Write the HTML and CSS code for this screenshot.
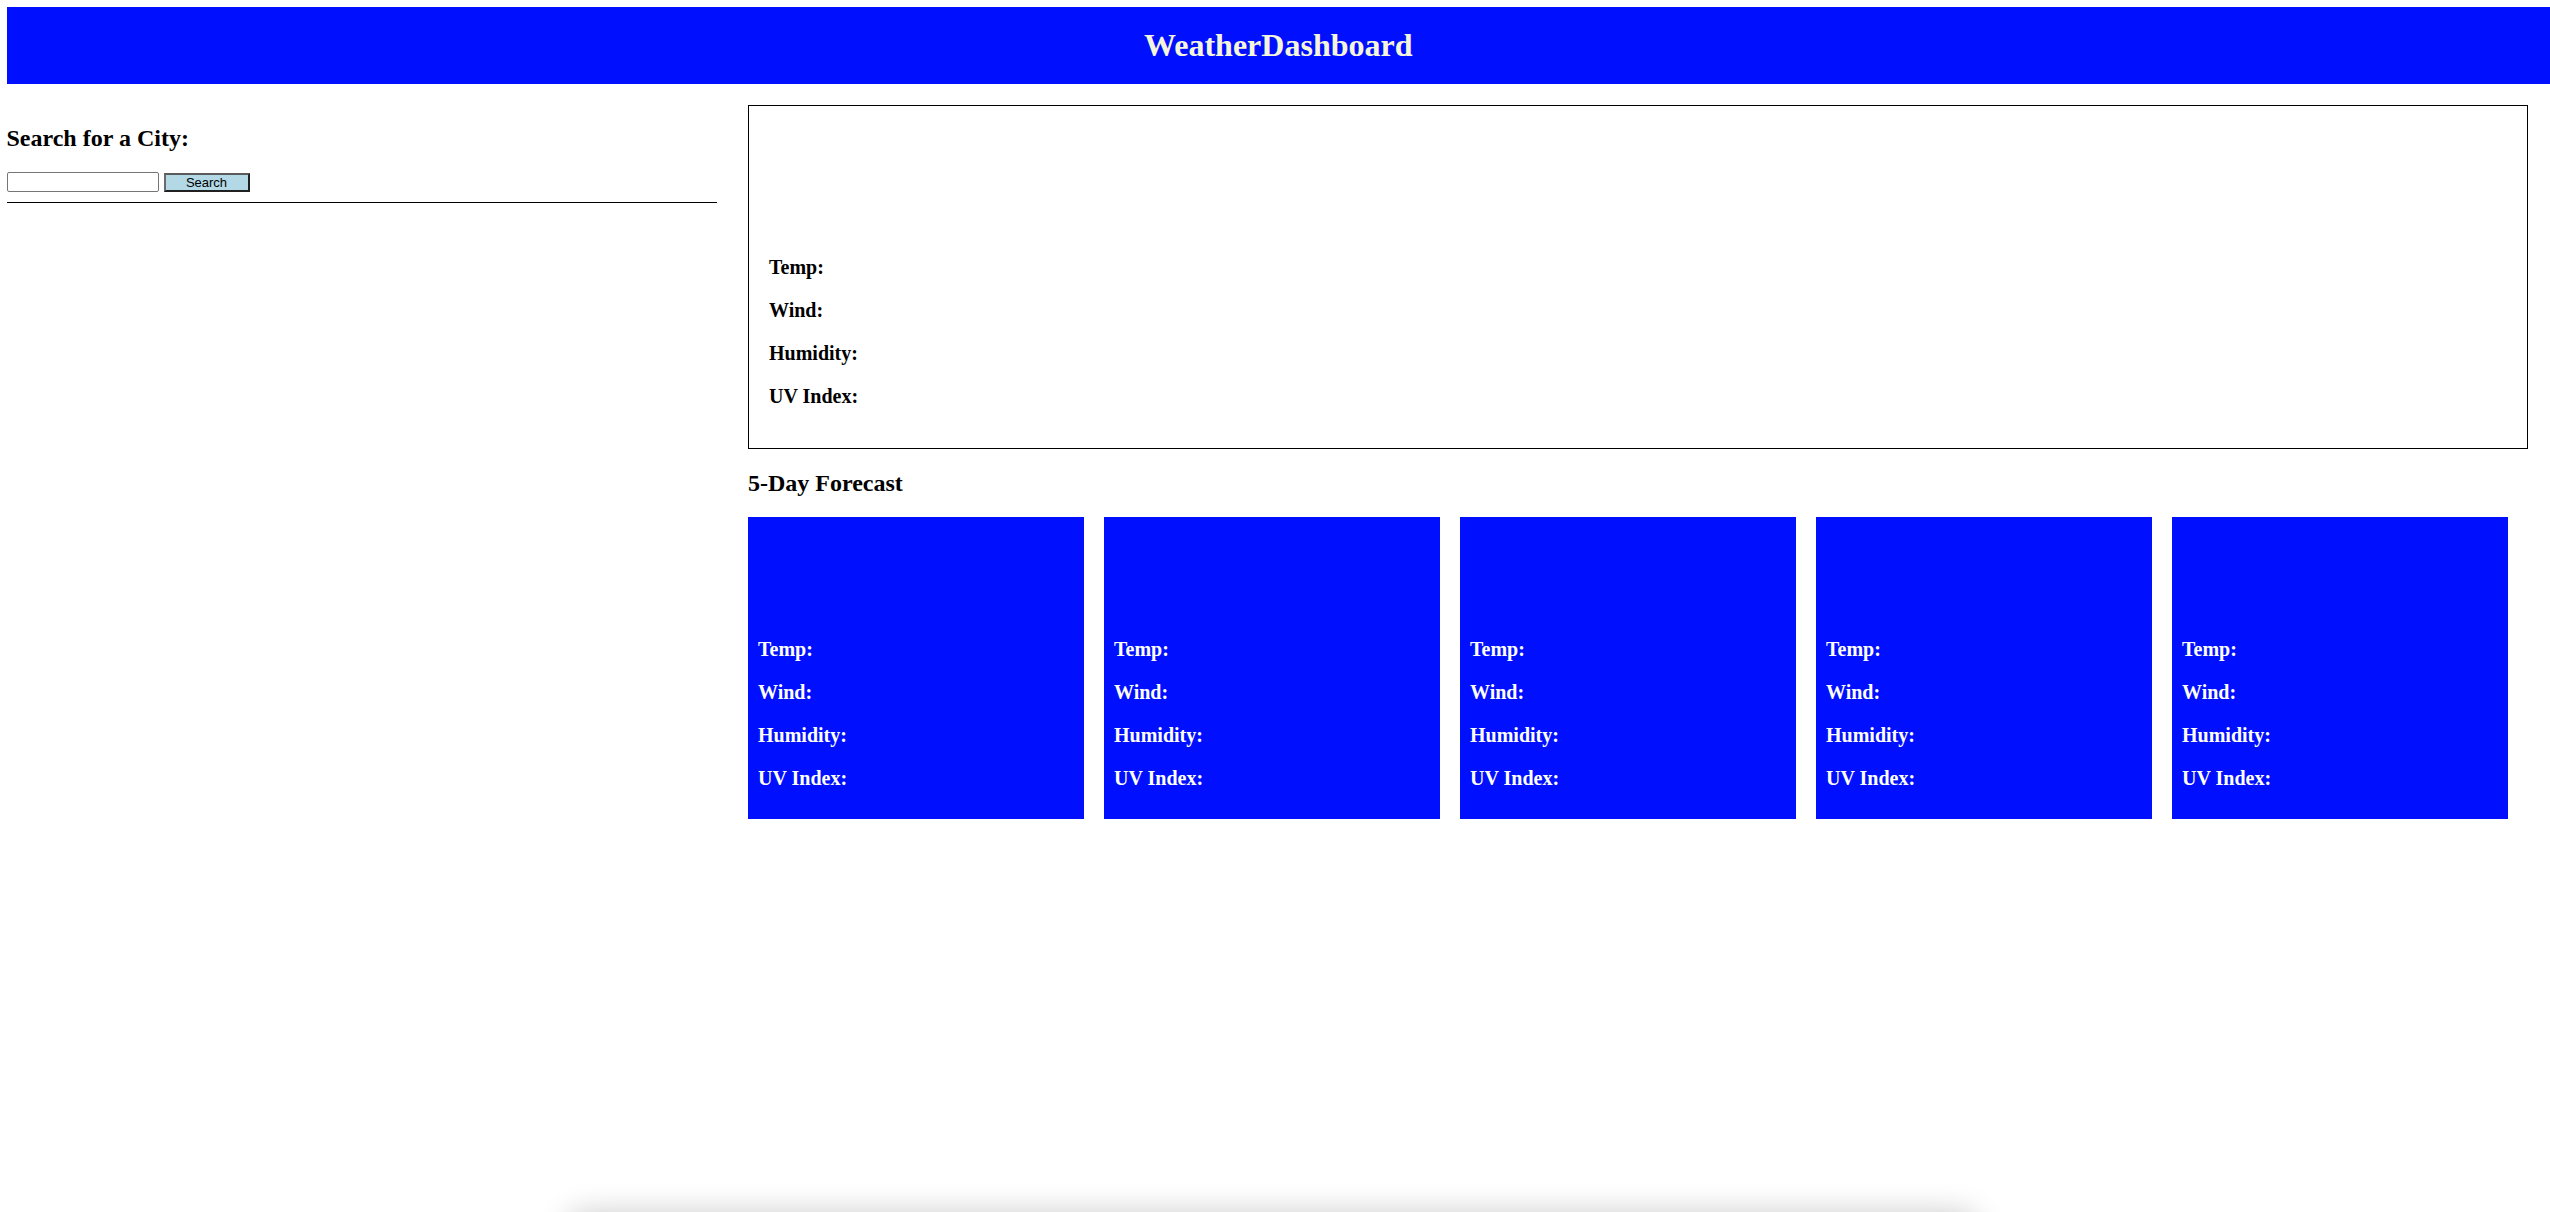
FILE: index.html
```html
<!DOCTYPE html>
<html lang="en">
<head>
<meta charset="utf-8">
<title>Weather Dashboard</title>
<link rel="stylesheet" href="styles.css">
</head>
<body>
<header class="site-header">
  <h1 class="site-title">WeatherDashboard</h1>
</header>
<main class="layout">
  <aside class="search-panel">
    <h2 class="panel-heading">Search for a City:</h2>
    <form class="search-form">
      <input class="search-input" type="text" aria-label="City">
      <button class="search-button" type="button">Search</button>
    </form>
    <hr class="divider">
  </aside>
  <section class="weather">
    <div class="current">
      <div class="current-head"></div>
      <p class="stat">Temp:</p>
      <p class="stat">Wind:</p>
      <p class="stat">Humidity:</p>
      <p class="stat">UV Index:</p>
    </div>
    <h2 class="panel-heading forecast-heading">5-Day Forecast</h2>
    <div class="forecast">
      <div class="day-card">
        <div class="day-head"></div>
        <p class="stat">Temp:</p>
        <p class="stat">Wind:</p>
        <p class="stat">Humidity:</p>
        <p class="stat">UV Index:</p>
      </div>
      <div class="day-card">
        <div class="day-head"></div>
        <p class="stat">Temp:</p>
        <p class="stat">Wind:</p>
        <p class="stat">Humidity:</p>
        <p class="stat">UV Index:</p>
      </div>
      <div class="day-card">
        <div class="day-head"></div>
        <p class="stat">Temp:</p>
        <p class="stat">Wind:</p>
        <p class="stat">Humidity:</p>
        <p class="stat">UV Index:</p>
      </div>
      <div class="day-card">
        <div class="day-head"></div>
        <p class="stat">Temp:</p>
        <p class="stat">Wind:</p>
        <p class="stat">Humidity:</p>
        <p class="stat">UV Index:</p>
      </div>
      <div class="day-card">
        <div class="day-head"></div>
        <p class="stat">Temp:</p>
        <p class="stat">Wind:</p>
        <p class="stat">Humidity:</p>
        <p class="stat">UV Index:</p>
      </div>
    </div>
  </section>
</main>
<div class="bottom-sheet"></div>
</body>
</html>
```

FILE: styles.css
```css
html, body {
  margin: 0;
  padding: 0;
  background: #ffffff;
  overflow: hidden;
}

body {
  font-family: "Liberation Serif", "Times New Roman", serif;
  color: #000000;
  height: 1212px;
}

.site-header {
  margin: 6.5px 0 0 6.5px;
  height: 77px;
  background: #0010ff;
  display: flex;
  align-items: center;
  justify-content: center;
}

.site-title {
  margin: 0;
  font-size: 32px;
  font-weight: bold;
  color: #f5f5dc;
}

.layout {
  display: grid;
  grid-template-columns: 710.5px 1780px;
  column-gap: 31px;
  align-items: start;
  padding: 21px 22px 0 6.5px;
}

.panel-heading {
  margin: 20px 0 20px 0;
  font-size: 24px;
  font-weight: bold;
}

.search-form {
  display: flex;
  align-items: center;
  gap: 5px;
  margin: 0;
}

.search-input {
  box-sizing: border-box;
  width: 152px;
  height: 20px;
  margin: 0;
  padding: 1px 3px;
  border: 1px solid #767676;
  border-radius: 2px;
  background: #ffffff;
}

.search-button {
  box-sizing: border-box;
  width: 86px;
  height: 19px;
  margin: 1px 0 0 0;
  padding: 0;
  background: #b3d8e6;
  border-style: solid;
  border-width: 2px;
  border-color: #5a5a5a #202020 #202020 #6a6a6a;
  font-family: "Liberation Sans", Arial, sans-serif;
  font-size: 13px;
  line-height: 15px;
  color: #000000;
}

.divider {
  margin: 10px 0 0 0;
  height: 0;
  border: 0;
  border-top: 1.5px solid #000000;
}

.current {
  border: 1.5px solid #000000;
  padding: 20px;
}

.current-head {
  height: 110px;
}

.stat {
  margin: 20px 0;
  font-size: 20px;
  font-weight: bold;
}

.forecast-heading {
  margin: 21px 0 20px 0;
}

.forecast {
  display: grid;
  grid-template-columns: repeat(5, 336px);
  column-gap: 20px;
}

.day-card {
  background: #0010ff;
  color: #ffffff;
  padding: 10px;
  height: 302px;
  box-sizing: border-box;
}

.day-head {
  height: 91px;
}

.bottom-sheet {
  position: fixed;
  left: 565px;
  width: 1415px;
  top: 1214px;
  height: 120px;
  border-radius: 22px;
  background: #ffffff;
  box-shadow: 0 -2px 30px rgba(0, 0, 0, 0.2);
}
```
